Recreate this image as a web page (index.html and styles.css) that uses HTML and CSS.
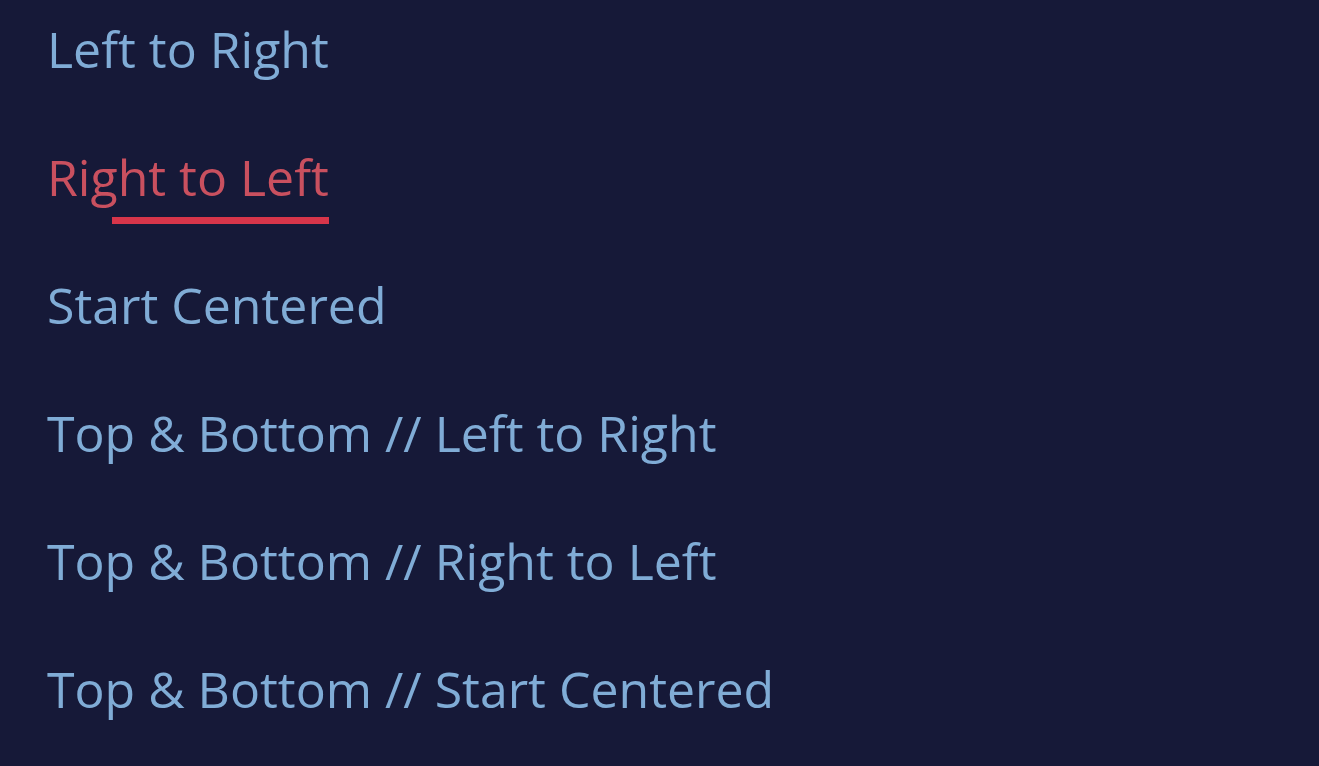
FILE: index.html
```html
<!DOCTYPE html>
<html>
<head>
  <title>Underline Hover Effects</title>
  <link rel="stylesheet" href="styles.css">
</head>
<body>
  <ul class="links">
    <li><a href="#" class="link">Left to Right</a></li>
    <li><a href="#" class="link link-active">Right to Left</a></li>
    <li><a href="#" class="link">Start Centered</a></li>
    <li><a href="#" class="link">Top &amp; Bottom // Left to Right</a></li>
    <li><a href="#" class="link">Top &amp; Bottom // Right to Left</a></li>
    <li><a href="#" class="link">Top &amp; Bottom // Start Centered</a></li>
  </ul>
</body>
</html>
```

FILE: styles.css
```css
body {
  margin: 0;
  background-color: #161938;
  font-family: "Open Sans", sans-serif;
  height: 100vh;
}

.links {
  list-style: none;
  margin: 0;
  padding: 15px 0 0 47px;
  display: flex;
  flex-direction: column;
  align-items: flex-start;
  gap: 60px;
}

.link {
  position: relative;
  display: inline-block;
  font-size: 50px;
  color: #80acd6;
  text-decoration: none;
}

.link-active {
  color: #c9505f;
}

.link-active::after {
  content: "";
  position: absolute;
  right: 0;
  bottom: -13px;
  width: 77%;
  height: 7px;
  background-color: #d7354a;
}
```
